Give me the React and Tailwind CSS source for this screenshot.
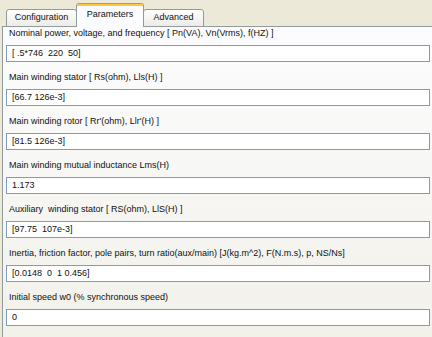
export default function App() {
  const rows = [
    ["Nominal power, voltage, and frequency [ Pn(VA), Vn(Vrms), f(HZ) ]", "[ .5*746  220  50]"],
    ["Main winding stator [ Rs(ohm), Lls(H) ]", "[66.7 126e-3]"],
    ["Main winding rotor [ Rr'(ohm), Llr'(H) ]", "[81.5 126e-3]"],
    ["Main winding mutual inductance Lms(H)", "1.173"],
    ["Auxiliary  winding stator [ RS(ohm), LlS(H) ]", "[97.75  107e-3]"],
    ["Inertia, friction factor, pole pairs, turn ratio(aux/main) [J(kg.m^2), F(N.m.s), p, NS/Ns]", "[0.0148  0  1 0.456]"],
    ["Initial speed w0 (% synchronous speed)", "0"],
  ];
  return (
    <div className="w-[432px] h-[337px] bg-[#ECE9D8] overflow-hidden font-['Liberation_Sans',sans-serif] text-[9px] text-[#111] flex flex-col">
      <div className="relative z-10 flex items-end h-[27px] pl-[6px] shrink-0">
        <div className="w-[71px] h-[18px] border border-[#919B9C] rounded-t-[3px] bg-gradient-to-b from-white to-[#ECEBE6] flex items-center justify-center leading-none pb-px">
          Configuration
        </div>
        <div className="w-[68px] h-[24px] -ml-px flex flex-col rounded-t-[3px] overflow-hidden border-x border-[#919B9C]">
          <div className="h-px bg-[#E68B2C]"></div>
          <div className="h-[2px] bg-[#FFC73C]"></div>
          <div className="flex-1 bg-[#FCFCFE] flex items-center justify-center leading-none pb-[4px]">Parameters</div>
        </div>
        <div className="w-[61px] h-[18px] -ml-px border border-[#919B9C] rounded-t-[3px] bg-gradient-to-b from-white to-[#ECEBE6] flex items-center justify-center leading-none pb-px">
          Advanced
        </div>
      </div>
      <div className="-mt-px ml-[2px] w-[440px] shrink-0 flex-1 border-l border-t border-[#919B9C] bg-gradient-to-b from-[#FCFCFE] to-[#F2F1EA] pl-[3px] flex flex-col gap-[9px]">
        {rows.map(([label, value], i) => (
          <div key={i} className="flex flex-col w-[424px]">
            <div className="h-[13px] leading-[13px] whitespace-pre pl-[3px]">{label}</div>
            <div className="mt-[5px] h-[17px] border border-[#7F9DB9] bg-white pl-[5px] leading-[15px] whitespace-pre">{value}</div>
          </div>
        ))}
      </div>
    </div>
  );
}
